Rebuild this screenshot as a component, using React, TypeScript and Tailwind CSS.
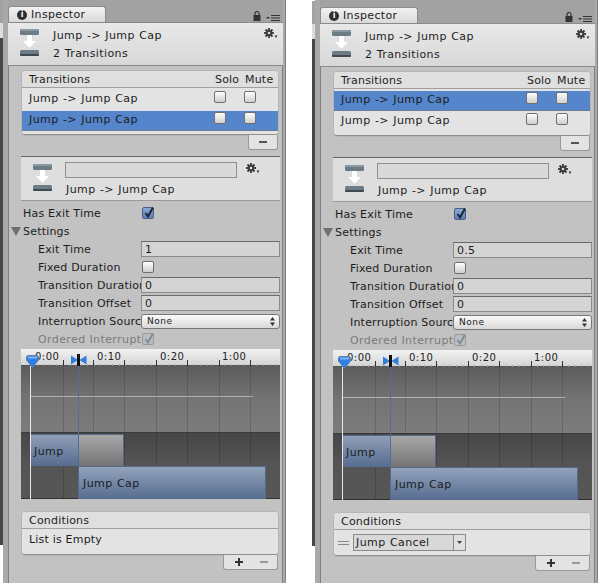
import React from 'react';

const GRID = [63, 93, 124, 156, 187, 219, 250];
const LABELS = [
  { x: 35, t: '0:00' },
  { x: 97, t: '0:10' },
  { x: 160, t: '0:20' },
  { x: 222, t: '1:00' },
];
const MINOR = Array.from({ length: 41 }, (_, i) => 31 + i * 6.25);

const Gear = () => (
  <svg width="14" height="11" viewBox="0 0 14 11">
    <g stroke="#3a3a3a" strokeWidth="1.800">
      <line x1="5" y1="0" x2="5" y2="10" />
      <line x1="0" y1="5" x2="10" y2="5" />
      <line x1="1.500" y1="1.500" x2="8.500" y2="8.500" />
      <line x1="8.500" y1="1.500" x2="1.500" y2="8.500" />
    </g>
    <circle cx="5" cy="5" r="3.300" fill="#3a3a3a" />
    <circle cx="5" cy="5" r="1.300" fill="#dedede" />
    <path d="M10.500 7.500h3l-1.500 2.500z" fill="#3a3a3a" />
  </svg>
);

const TransitionIcon = () => (
  <svg width="19" height="27" viewBox="0 0 19 27">
    <path d="M5 5h9v4l-2 3v4l3 6H4l3-6v-4L5 9z" fill="#dcdcdc" />
    <path d="M7 6h5v6h4l-6.500 7L3 12h4z" fill="#ffffff" />
    <rect x="0" y="0" width="19" height="6" rx="1.500" fill="#6b7c85" />
    <rect x="0" y="21" width="19" height="6" rx="1.500" fill="#6b7c85" />
    <rect x="0" y="0" width="19" height="2" rx="1" fill="#8a9aa2" />
    <rect x="0" y="25" width="19" height="2" rx="1" fill="#3f4a50" />
  </svg>
);

const Check = ({ disabled }: { disabled?: boolean }) => (
  <div
    className={`relative w-[12px] h-[12px] rounded-[2px] border ${
      disabled ? 'border-[#9a9a9a] bg-[#b4bec8]' : 'border-[#4a5f80] bg-gradient-to-b from-[#8aa8d8] to-[#5c80b8]'
    }`}
  >
    <svg width="14" height="13" viewBox="0 0 14 13" className="absolute left-0 -top-[2px]">
      <path d="M2.500 7l2.500 3.500L10 1.500" fill="none" stroke={disabled ? '#8a8a8a' : '#1c2430'} strokeWidth="2" />
    </svg>
  </div>
);

const Box = () => (
  <div className="w-[12px] h-[12px] rounded-[2px] border border-[#6f6f6f] bg-gradient-to-b from-[#fdfdfd] to-[#cfcfcf]" />
);

const ListRow = ({ className, selected }: { className: string; selected?: boolean }) => (
  <div className={`flex items-start pl-[7px] ${selected ? 'bg-[#5585ca]' : ''} ${className}`}>
    <span className="w-[185px] tracking-[0.4px] [word-spacing:0.500px]">Jump -&gt; Jump Cap</span>
    <Box />
    <span className="w-[18px]" />
    <Box />
  </div>
);

const Field = ({ label, indent, children, muted }: { label: string; indent?: boolean; children?: React.ReactNode; muted?: boolean }) => (
  <div className={`flex items-center h-[18px] ${indent ? 'pl-[29px]' : 'pl-[14px]'}`}>
    <div className={`overflow-hidden whitespace-nowrap ${indent ? 'w-[103px]' : 'w-[119px]'} ${muted ? 'text-[#7a7a7a] tracking-[0.4px]' : ''}`}>{label}</div>
    {children}
  </div>
);

const NumInput = ({ value }: { value: string }) => (
  <div className="w-[139px] h-[16px] flex items-center pl-[3px] border border-[#8b8b8b] border-t-[#6a6a6a] bg-[#d4d4d4]">{value}</div>
);

const Timeline = () => (
  <div className="relative w-[259px] h-[151px] ml-[12px] mt-px overflow-hidden">
    <div className="h-[17px] bg-gradient-to-b from-[#f2f2f2] to-[#d4d4d4] border-b border-[#555]" />
    <div className="h-[67px] bg-gradient-to-b from-[#5c5c5c] via-[#747474] to-[#7c7c7c] border-b border-[#3a3a3a]" />
    <div className="h-[66px] bg-gradient-to-b from-[#474747] via-[#555] to-[#565656] border-b border-[#333]" />

    {/* ruler and grid */}
    {MINOR.map((x) => (
      <div key={x} className="absolute top-[15px] w-px h-[2px] bg-[#a0a0a0]" style={{ left: x - 21 }} />
    ))}
    {GRID.map((x) => (
      <React.Fragment key={x}>
        <div className="absolute top-[11px] w-px h-[6px] bg-[#333]" style={{ left: x - 21 }} />
        <div className="absolute top-[17px] w-px h-[133px] bg-[#000]/15" style={{ left: x - 21 }} />
      </React.Fragment>
    ))}
    {LABELS.map((l) => (
      <span key={l.t} className="absolute top-[3px] text-[10px] tracking-[0.5px] text-[#222]" style={{ left: l.x - 21 }}>
        {l.t}
      </span>
    ))}

    {/* curve */}
    <div className="absolute left-[9px] top-[47px] w-[223px] h-px bg-[#b0b0b0]" />

    {/* clips */}
    <div className="absolute left-[10px] top-[85px] w-[47px] h-[32px] flex items-center pl-[3px] pt-[2px] tracking-[0.4px] text-[#1c1c1c] bg-gradient-to-b from-[#909fb8] to-[#566c90] border-t border-[#56688a]">
      Jump
    </div>
    <div className="absolute left-[57px] top-[85px] w-[46px] h-[32px] bg-gradient-to-b from-[#a8a8a8] to-[#747474] border-t border-r border-[#56688a]" />
    <div className="absolute left-[57px] top-[117px] w-[188px] h-[33px] flex items-center pl-[4px] tracking-[0.4px] [word-spacing:0.500px] text-[#1c1c1c] bg-gradient-to-b from-[#93a3bc] to-[#566c90] border border-b-0 border-[#56688a]">
      Jump Cap
    </div>

    {/* playheads */}
    <div className="absolute left-[9px] top-[17px] w-px h-[133px] bg-[#e8e8e8]" />
    <div className="absolute left-[57px] top-[17px] w-px h-[68px] bg-[#566e94]" />
    <div className="absolute left-[57px] top-[85px] w-px h-[32px] bg-[#566e94]" />
    <svg width="13" height="13" viewBox="0 0 13 13" className="absolute left-[5px] top-[6px]">
      <path d="M1.500 .500h10l1 1.500v3L6.500 12.500 .500 5V2z" fill="#2f7fe8" stroke="#5f7fa8" />
      <path d="M2 1.500h9v2H2z" fill="#7fb4f4" />
    </svg>
    <svg width="16" height="12" viewBox="0 0 16 12" className="absolute left-[50px] top-[5px]">
      <path d="M0 1.500l7 4.500-7 4.500zM15.500 1.500L8.500 6l7 4.500z" fill="#2f7fd8" />
      <rect x="6" y="0" width="3" height="12" fill="#111" />
    </svg>
  </div>
);

const Inspector = ({ variant }: { variant: 'a' | 'b' }) => (
  <div className="relative w-[286px] h-[583px] shrink-0 flex bg-[#a9a9a9] overflow-hidden">
    {/* neighbouring window sliver */}
    <div className={`w-[3px] flex flex-col bg-white ${variant === 'b' ? 'pt-px' : ''}`}>
      <div className="h-[23px] bg-[#a2a2a2]" />
      <div className="h-[15px] bg-[#dcdcdc]" />
      <div className="h-[507px] bg-[#474747]" />
    </div>
    <div className="w-[5px]" />

    <div className={`w-[275px] flex flex-col bg-[#a2a2a2] ${variant === 'b' ? 'pt-px' : ''}`}>
      {/* tab bar */}
      <div className="relative h-[22px] shrink-0 flex items-end">
        <div className="w-[98px] h-[16px] flex items-center pl-[8px] gap-[3px] rounded-t-[3px] border border-b-0 border-[#8c8c8c] bg-gradient-to-b from-[#f2f2f2] to-[#dadada]">
          <span className="w-[10px] h-[10px] rounded-full bg-[#2e2e2e] text-white text-[8px] leading-[10px] text-center font-bold">i</span>
          <span className="pl-[1px] tracking-[0.35px]">Inspector</span>
        </div>
        <svg width="8" height="10" viewBox="0 0 8 10" className="absolute left-[245px] top-[11px]">
          <path d="M2 4V2.500a2 2 0 0 1 4 0V4" fill="none" stroke="#333" strokeWidth="1.200" />
          <rect x="0.500" y="4" width="7" height="6" fill="#333" />
        </svg>
        <svg width="14" height="6" viewBox="0 0 14 6" className="absolute left-[258px] top-[15px]">
          <path d="M0 2h4L2 4z" fill="#333" />
          <path d="M5 .500h9M5 3h9M5 5.500h9" stroke="#333" />
        </svg>
      </div>

      <div className="flex-1 bg-[#c2c2c2] border-x border-[#808080]">
        {/* header */}
        <div className="relative h-[44px] -mx-px flex border-y border-[#8a8a8a] bg-gradient-to-b from-[#e8e8e8] to-[#d8d8d8]">
          <div className="pl-[12px] pt-[6px]">
            <TransitionIcon />
          </div>
          <div className="pl-[14px] pt-[4px] leading-[18px] tracking-[0.4px] [word-spacing:0.500px]">
            <div>Jump -&gt; Jump Cap</div>
            <div>2 Transitions</div>
          </div>
          <div className="absolute left-[256px] top-[5px]">
            <Gear />
          </div>
        </div>

        {/* transitions list */}
        <div className="ml-[13px] mt-[5px] w-[256px] rounded-[3px] border-b border-[#8f8f8f] bg-[#e3e3e3] shadow-[0_0_0_0.5px_#aaa]">
          <div className="h-[17px] flex items-center pl-[7px] border-b border-[#a0a0a0] bg-[#dfdfdf] rounded-t-[3px] tracking-[0.2px]">
            <span className="w-[186px]">Transitions</span>
            <span className="w-[30px]">Solo</span>
            <span>Mute</span>
          </div>
          {variant === 'a' ? (
            <>
              <ListRow className="h-[23px] pt-[3px] leading-[16px]" />
              <ListRow selected className="h-[20px] pt-[1px] leading-[16px] border-b border-[#6d7c90]" />
              <div className="h-[3px]" />
            </>
          ) : (
            <>
              <div className="h-[2px]" />
              <ListRow selected className="h-[20px] pt-[1px] leading-[16px] border-b border-[#6d7c90]" />
              <ListRow className="h-[24px] pt-[2px] leading-[16px]" />
            </>
          )}
        </div>
        <div className="ml-[239px] w-[30px] h-[15px] flex items-center justify-center rounded-b-[3px] border border-t-0 border-[#999] bg-[#e3e3e3]">
          <span className="w-[8px] h-[2px] bg-[#555]" />
        </div>

        {/* selected transition */}
        <div className="relative ml-[12px] mt-[6px] w-[259px] h-[45px] flex border-t border-b border-t-[#666] border-b-[#999] bg-[#dedede]">
          <div className="pl-[12px] pt-[7px]">
            <TransitionIcon />
          </div>
          <div className="pl-[13px] pt-[5px]">
            <div className="w-[172px] h-[16px] border border-[#8f8f8f] bg-[#d9d9d9]" />
            <div className="pl-[1px] pt-[6px] tracking-[0.4px] [word-spacing:0.500px]">Jump -&gt; Jump Cap</div>
          </div>
          <div className="absolute left-[225px] top-[6px]">
            <Gear />
          </div>
        </div>

        {/* settings */}
        <div className="mt-[3px] tracking-[0.2px]">
          <Field label="Has Exit Time">
            <Check />
          </Field>
          <div className="relative flex items-center h-[18px] pl-[14px]">
            <svg width="10" height="9" viewBox="0 0 10 9" className="absolute left-[2px] top-[5px]">
              <path d="M0 0h10L5 9z" fill="#707070" />
            </svg>
            Settings
          </div>
          <Field label="Exit Time" indent>
            <NumInput value={variant === 'a' ? '1' : '0.5'} />
          </Field>
          <Field label="Fixed Duration" indent>
            <div className="pl-[1px]">
              <Box />
            </div>
          </Field>
          <Field label="Transition Duration" indent>
            <NumInput value="0" />
          </Field>
          <Field label="Transition Offset" indent>
            <NumInput value="0" />
          </Field>
          <Field label="Interruption Source" indent>
            <div className="w-[139px] h-[15px] flex items-center justify-between pl-[5px] pr-[4px] rounded-[3px] border border-[#777] bg-gradient-to-b from-[#fbfbfb] to-[#d8d8d8] text-[9px] tracking-[0.5px]">
              None
              <svg width="5" height="9" viewBox="0 0 5 9">
                <path d="M2.500 0L5 3.500H0zM2.500 9L0 5.500h5z" fill="#333" />
              </svg>
            </div>
          </Field>
          <Field label="Ordered Interruption" indent muted>
            <div className="pl-[1px]">
              <Check disabled />
            </div>
          </Field>
        </div>

        <Timeline />

        {/* conditions */}
        <div className="ml-[13px] mt-[12px] w-[256px] rounded-[3px] border-b border-[#8f8f8f] bg-[#e3e3e3] shadow-[0_0_0_0.5px_#aaa] tracking-[0.2px]">
          <div className="h-[17px] flex items-center pl-[7px] border-b border-[#a0a0a0] bg-[#dfdfdf] rounded-t-[3px]">Conditions</div>
          {variant === 'a' ? (
            <div className="h-[25px] pl-[7px] leading-[22px]">List is Empty</div>
          ) : (
            <div className="h-[25px] flex items-center pl-[4px]">
              <div className="w-[11px] h-[4px] border-y border-[#8a8a8a]" />
              <div className="ml-[4px] w-[113px] h-[17px] flex items-center justify-between border border-[#8a8a8a] bg-[#d8d8d8] pl-[2px] tracking-[0.4px] [word-spacing:0.500px]">
                Jump Cancel
                <div className="w-[12px] h-[15px] flex items-center justify-center border-l border-[#8a8a8a] bg-[#e0e0e0]">
                  <svg width="5" height="3" viewBox="0 0 5 3">
                    <path d="M0 0h5L2.500 3z" fill="#444" />
                  </svg>
                </div>
              </div>
            </div>
          )}
        </div>
        <div className="ml-[214px] w-[55px] h-[15px] flex items-center pl-[11px] gap-[17px] rounded-b-[3px] border border-t-0 border-[#999] bg-[#e3e3e3]">
          <svg width="8" height="8" viewBox="0 0 8 8">
            <path d="M4 0v8M0 4h8" stroke="#333" strokeWidth="2" />
          </svg>
          <span className="w-[8px] h-[2px] bg-[#999]" />
        </div>
      </div>
    </div>

    <div className="w-[3px] bg-[#a9a9a9] border-r border-[#808080]" />
  </div>
);

export default function App() {
  return (
    <div className="w-[601px] h-[583px] flex gap-[26px] bg-white overflow-hidden text-[11px] leading-none text-[#1c1c1c] font-['DejaVu_Sans',sans-serif]">
      <Inspector variant="a" />
      <Inspector variant="b" />
    </div>
  );
}
